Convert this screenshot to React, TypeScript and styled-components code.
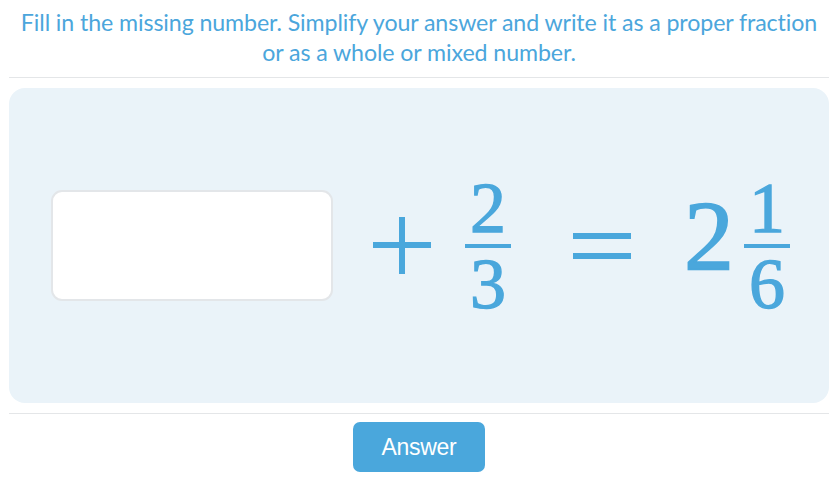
import styled, { createGlobalStyle } from 'styled-components';

const GlobalStyle = createGlobalStyle`
  body {
    margin: 0;
    background: #ffffff;
  }
`;

const BLUE = '#4aa7dc';
const SERIF = `'Liberation Serif', 'Times New Roman', serif`;

const App = () => {
  return (
    <Page>
      <GlobalStyle />
      <Prompt>
        Fill in the missing number. Simplify your answer and write it as a proper fraction
        <br />
        or as a whole or mixed number.
      </Prompt>
      <Divider />
      <QuestionPanel>
        <AnswerBox type="text" aria-label="missing number" />
        <Plus />
        <Fraction numerator={2} denominator={3} />
        <Equals />
        <MixedNumber>
          <Whole>2</Whole>
          <Fraction numerator={1} denominator={6} />
        </MixedNumber>
      </QuestionPanel>
      <Divider />
      <Footer>
        <AnswerButton type="button">Answer</AnswerButton>
      </Footer>
    </Page>
  );
};

export default App;

const Fraction = ({ numerator, denominator }: { numerator: number; denominator: number }) => (
  <FractionStack>
    <Digit>{numerator}</Digit>
    <Bar />
    <Digit>{denominator}</Digit>
  </FractionStack>
);

const Page = styled.div`
  margin: 0 11px 0 9px;
`;

const Prompt = styled.p`
  margin: 0;
  padding-top: 7px;
  font-family: Lato, 'Open Sans', sans-serif;
  font-size: 23.2px;
  line-height: 30px;
  letter-spacing: -0.1px;
  color: #4ba6dc;
  text-align: center;
  white-space: nowrap;
`;

const Divider = styled.hr`
  margin: 10px 0;
  border: 0;
  border-top: 1px solid #e4e6e8;
`;

const QuestionPanel = styled.div`
  display: flex;
  align-items: center;
  height: 315px;
  padding-left: 42px;
  background: #eaf3f9;
  border-radius: 16px;
`;

const AnswerBox = styled.input`
  box-sizing: border-box;
  width: 282px;
  height: 111px;
  border: 2px solid #e3e6e9;
  border-radius: 11px;
  background: #ffffff;
  outline: none;
`;

const Plus = styled.span`
  position: relative;
  width: 58px;
  height: 57px;
  margin: 0 34px 0 40px;

  &::before,
  &::after {
    content: '';
    position: absolute;
    background: ${BLUE};
  }

  &::before {
    left: 0;
    right: 0;
    top: 25px;
    height: 6px;
  }

  &::after {
    top: 0;
    bottom: 0;
    left: 26px;
    width: 6px;
  }
`;

const Equals = styled.span`
  box-sizing: border-box;
  width: 58px;
  height: 26px;
  margin: 0 53px 0 62px;
  border-top: 6px solid ${BLUE};
  border-bottom: 6px solid ${BLUE};
`;

const FractionStack = styled.span`
  display: inline-flex;
  flex-direction: column;
  align-items: center;
  gap: 12px;
  width: 46px;
`;

const Digit = styled.span`
  font-family: ${SERIF};
  font-size: 72px;
  line-height: 48px;
  color: ${BLUE};
  -webkit-text-stroke: 1.3px ${BLUE};
`;

const Bar = styled.span`
  width: 100%;
  height: 4px;
  background: ${BLUE};
`;

const MixedNumber = styled.span`
  display: inline-flex;
  align-items: center;
  gap: 10px;
`;

const Whole = styled.span`
  padding-bottom: 20px;
  font-family: ${SERIF};
  font-size: 100px;
  line-height: 68px;
  color: ${BLUE};
  -webkit-text-stroke: 1.6px ${BLUE};
`;

const Footer = styled.div`
  display: flex;
  justify-content: center;
`;

const AnswerButton = styled.button`
  width: 132px;
  height: 50px;
  margin-top: -2px;
  border: 0;
  border-radius: 7px;
  background: ${BLUE};
  color: #ffffff;
  font-family: 'Liberation Sans', Arial, sans-serif;
  font-size: 23px;
  letter-spacing: -0.3px;
  cursor: pointer;
`;
